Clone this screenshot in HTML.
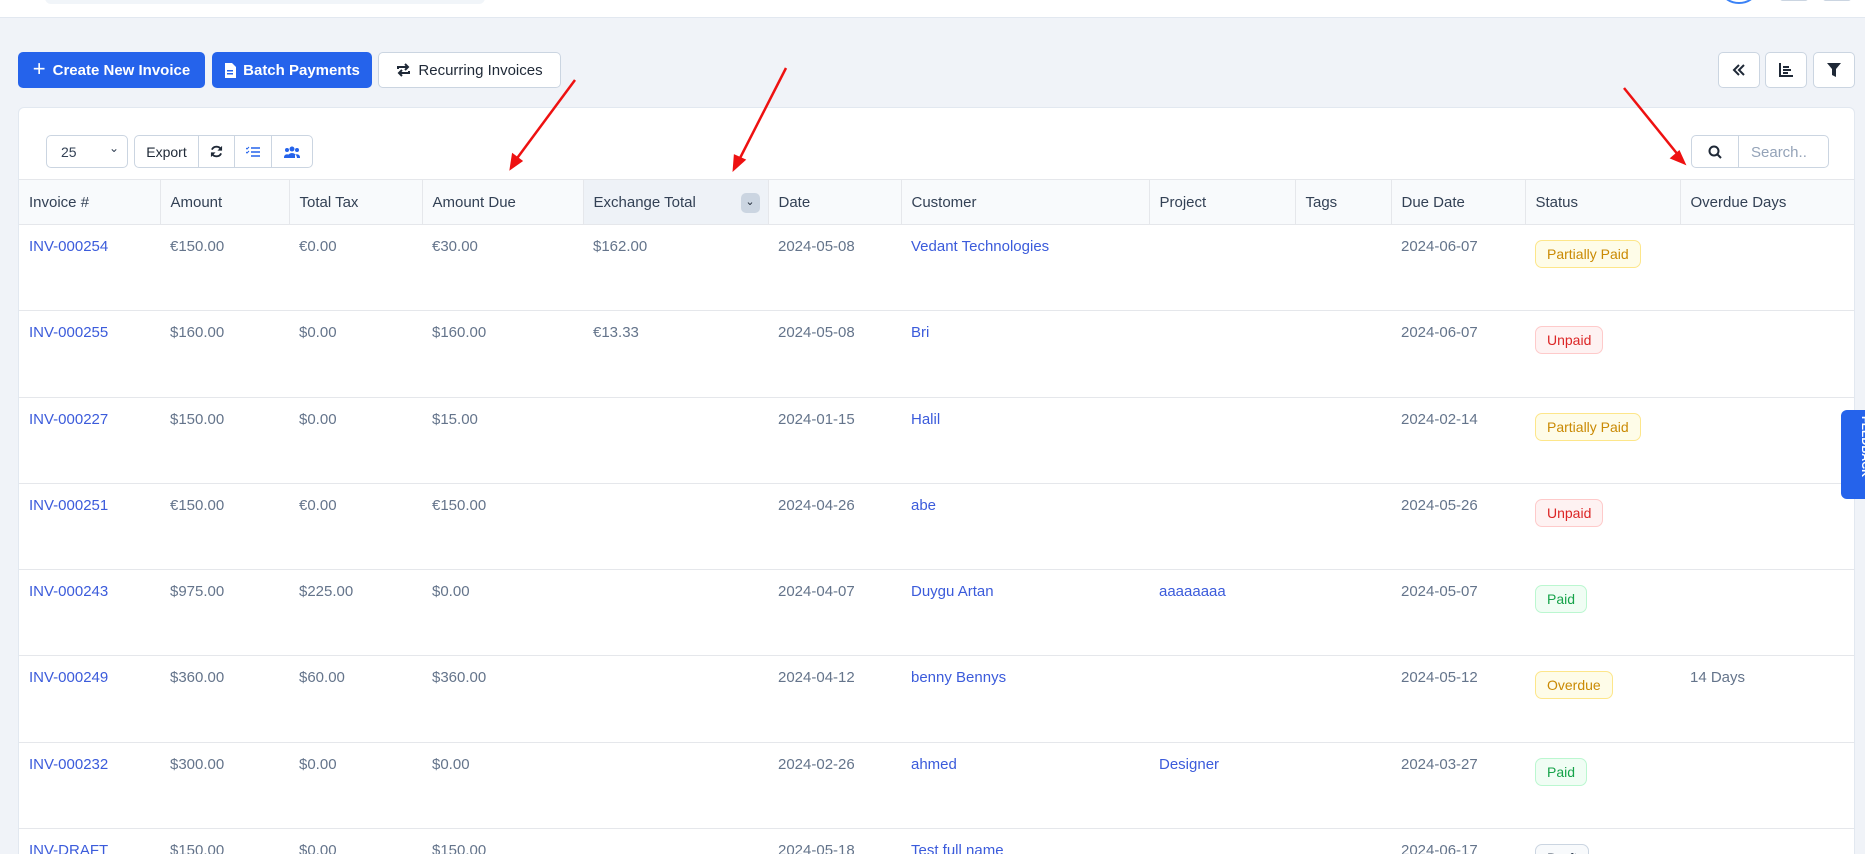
<!DOCTYPE html>
<html><head><meta charset="utf-8"><style>
*{box-sizing:border-box;margin:0;padding:0}
html,body{width:1865px;height:854px;overflow:hidden}
body{background:#f0f3f8;font-family:"Liberation Sans",sans-serif;position:relative;color:#475569}
.top{position:absolute;left:0;top:0;width:1865px;height:18px;background:#fff;border-bottom:1px solid #e2e8f0}
.topsearch{position:absolute;left:45px;top:-10px;width:440px;height:14px;background:#f1f5f9;border-radius:6px}
.btn{position:absolute;top:52px;height:36px;border-radius:5px;font-size:15px;display:flex;align-items:center;justify-content:center;gap:7px;font-weight:bold}
.blue{background:#2563eb;color:#fff}
.white{background:#fff;border:1px solid #cbd5e1;color:#1f2937;font-weight:normal}
.ib{position:absolute;top:52px;width:42px;height:36px;background:#fff;border:1px solid #cbd5e1;border-radius:5px;display:flex;align-items:center;justify-content:center}
.card{position:absolute;left:18px;top:107px;width:1837px;height:800px;background:#fff;border:1px solid #e2e8f0;border-radius:6px;overflow:hidden}
.sel{position:absolute;left:27px;top:27px;width:82px;height:33px;border:1px solid #cbd5e1;border-radius:5px;font-size:14px;color:#334155;padding:8px 14px}
.grp{position:absolute;left:115px;top:27px;height:33px;display:flex;border:1px solid #cbd5e1;border-radius:5px;overflow:hidden}
.grp div{border-right:1px solid #cbd5e1;height:100%;display:flex;align-items:center;justify-content:center;font-size:14px;color:#1f2937}
.grp div:last-child{border-right:none}
.srch{position:absolute;left:1672px;top:27px;width:138px;height:33px;border:1px solid #cbd5e1;border-radius:5px;display:flex}
table{position:absolute;left:0;top:71px;border-collapse:collapse;table-layout:fixed;width:1837px}
th{height:45px;background:#f8fafc;text-align:left;font-weight:normal;font-size:15px;color:#334155;padding-left:10px;border-right:1px solid #e5e7eb;border-bottom:1px solid #e5e7eb;border-top:1px solid #e5e7eb}
td{height:86.3px;vertical-align:top;padding:13px 0 0 10px;font-size:15px;color:#64748b;border-bottom:1px solid #e5e7eb}
.l{color:#3b5bdb}
.b{display:inline-block;font-size:14px;padding:5px 11px;border-radius:7px;border:1px solid;margin-top:2px}
.pp{background:#fefce8;border-color:#fde68a;color:#ca8a04}
.up{background:#fef2f2;border-color:#fecaca;color:#dc2626}
.pd{background:#f0fdf4;border-color:#bbf7d0;color:#16a34a}
.dr{background:#f8fafc;border-color:#cbd5e1;color:#334155}
.fb{position:absolute;left:1841px;top:410px;width:30px;height:89px;background:#2563eb;border-radius:6px 0 0 6px;color:#fff;font-size:11px;font-weight:bold;writing-mode:vertical-rl;padding-top:6px}
</style></head><body>
<div class="top"><div class="topsearch"></div>
<div style="position:absolute;left:1722px;top:-20px;width:34px;height:24px;border:2px solid #3b82f6;border-radius:50%"></div>
<div style="position:absolute;left:1780px;top:-4px;width:28px;height:5px;border:1px solid #cbd5e1;border-radius:3px"></div>
<div style="position:absolute;left:1823px;top:-4px;width:28px;height:5px;border:1px solid #cbd5e1;border-radius:3px"></div></div>

<div class="btn blue" style="left:18px;width:187px"><span style="font-size:22px;font-weight:normal;margin-top:-2px">+</span>Create New Invoice</div>
<div class="btn blue" style="left:212px;width:160px"><svg width="12" height="15" viewBox="0 0 12 15"><path d="M1 0h7l4 4v11H1z" fill="#fff"/><rect x="3" y="7" width="6" height="1.5" fill="#2563eb"/><rect x="3" y="10" width="6" height="1.5" fill="#2563eb"/></svg>Batch Payments</div>
<div class="btn white" style="left:378px;width:183px"><svg width="15" height="14" viewBox="0 0 15 14"><path d="M2 6V4h10M9 1l3 3-3 3M13 8v2H3M6 13l-3-3 3-3" fill="none" stroke="#1f2937" stroke-width="2"/></svg>Recurring Invoices</div>

<div class="ib" style="left:1718px"><svg width="14" height="12" viewBox="0 0 14 12"><path d="M7 1L2 6l5 5M12 1L7 6l5 5" fill="none" stroke="#1f2937" stroke-width="2"/></svg></div>
<div class="ib" style="left:1765px"><svg width="14" height="14" viewBox="0 0 14 14"><path d="M1 0v13h13M4 4h6M4 7h8M4 10h5" fill="none" stroke="#1f2937" stroke-width="2"/></svg></div>
<div class="ib" style="left:1813px"><svg width="14" height="14" viewBox="0 0 14 14"><path d="M0 0h14L9 6v8l-4-2V6z" fill="#1f2937"/></svg></div>

<div class="card">
<div class="sel">25<span style="position:absolute;right:8px;top:5px;font-size:12px">&#8964;</span></div>
<div class="grp"><div style="width:64px">Export</div><div style="width:36px"><svg width="13" height="13" viewBox="0 0 14 14"><path d="M12 5A5.5 5.5 0 0 0 2 5M2 9a5.5 5.5 0 0 0 10 0" fill="none" stroke="#1f2937" stroke-width="2"/><path d="M13 1v5H8zM1 13V8h5z" fill="#1f2937"/></svg></div><div style="width:37px"><svg width="14" height="12" viewBox="0 0 14 12"><path d="M5 2h9M5 6h9M5 10h9" stroke="#2563eb" stroke-width="1.6"/><path d="M0 2l1 1 2-2M0 6l1 1 2-2" stroke="#2563eb" fill="none"/></svg></div><div style="width:40px"><svg width="16" height="12" viewBox="0 0 16 12"><circle cx="8" cy="3" r="2.5" fill="#2563eb"/><circle cx="3" cy="4" r="2" fill="#2563eb"/><circle cx="13" cy="4" r="2" fill="#2563eb"/><path d="M3 12a5 5 0 0 1 10 0zM0 11a3 3 0 0 1 5-2v3H0zM16 11a3 3 0 0 0-5-2v3h5z" fill="#2563eb"/></svg></div></div>
<div class="srch"><div style="width:47px;border-right:1px solid #cbd5e1;display:flex;align-items:center;justify-content:center"><svg width="14" height="14" viewBox="0 0 14 14"><circle cx="6" cy="6" r="4.5" fill="none" stroke="#1f2937" stroke-width="2"/><path d="M9.5 9.5L13 13" stroke="#1f2937" stroke-width="2"/></svg></div><div style="padding:8px 12px;font-size:15px;color:#94a3b8">Search..</div></div>

<table>
<colgroup><col style="width:141px"><col style="width:129px"><col style="width:133px"><col style="width:161px"><col style="width:185px"><col style="width:133px"><col style="width:248px"><col style="width:146px"><col style="width:96px"><col style="width:134px"><col style="width:155px"><col style="width:176px"></colgroup>
<tr><th>Invoice #</th><th>Amount</th><th>Total Tax</th><th>Amount Due</th><th style="background:#eef2f7;position:relative">Exchange Total<span style="position:absolute;right:8px;top:13px;width:19px;height:20px;background:#cbd5e1;border-radius:5px;font-size:11px;text-align:center;line-height:18px;color:#1f2937">&#8964;</span></th><th>Date</th><th>Customer</th><th>Project</th><th>Tags</th><th>Due Date</th><th>Status</th><th style="border-right:none">Overdue Days</th></tr>
<tr><td class="l">INV-000254</td><td>€150.00</td><td>€0.00</td><td>€30.00</td><td>$162.00</td><td>2024-05-08</td><td class="l">Vedant Technologies</td><td></td><td></td><td>2024-06-07</td><td><span class="b pp">Partially Paid</span></td><td></td></tr>
<tr><td class="l">INV-000255</td><td>$160.00</td><td>$0.00</td><td>$160.00</td><td>€13.33</td><td>2024-05-08</td><td class="l">Bri</td><td></td><td></td><td>2024-06-07</td><td><span class="b up">Unpaid</span></td><td></td></tr>
<tr><td class="l">INV-000227</td><td>$150.00</td><td>$0.00</td><td>$15.00</td><td></td><td>2024-01-15</td><td class="l">Halil</td><td></td><td></td><td>2024-02-14</td><td><span class="b pp">Partially Paid</span></td><td></td></tr>
<tr><td class="l">INV-000251</td><td>€150.00</td><td>€0.00</td><td>€150.00</td><td></td><td>2024-04-26</td><td class="l">abe</td><td></td><td></td><td>2024-05-26</td><td><span class="b up">Unpaid</span></td><td></td></tr>
<tr><td class="l">INV-000243</td><td>$975.00</td><td>$225.00</td><td>$0.00</td><td></td><td>2024-04-07</td><td class="l">Duygu Artan</td><td class="l">aaaaaaaa</td><td></td><td>2024-05-07</td><td><span class="b pd">Paid</span></td><td></td></tr>
<tr><td class="l">INV-000249</td><td>$360.00</td><td>$60.00</td><td>$360.00</td><td></td><td>2024-04-12</td><td class="l">benny Bennys</td><td></td><td></td><td>2024-05-12</td><td><span class="b pp">Overdue</span></td><td>14 Days</td></tr>
<tr><td class="l">INV-000232</td><td>$300.00</td><td>$0.00</td><td>$0.00</td><td></td><td>2024-02-26</td><td class="l">ahmed</td><td class="l">Designer</td><td></td><td>2024-03-27</td><td><span class="b pd">Paid</span></td><td></td></tr>
<tr><td class="l">INV-DRAFT</td><td>$150.00</td><td>$0.00</td><td>$150.00</td><td></td><td>2024-05-18</td><td class="l">Test full name</td><td></td><td></td><td>2024-06-17</td><td><span class="b dr">Draft</span></td><td></td></tr>
</table>
</div>
<div class="fb">FEEDBACK</div>
<svg style="position:absolute;left:0;top:0" width="1865" height="854"><g stroke="#ee1111" stroke-width="2.5" fill="#ee1111"><line x1="575" y1="80" x2="515" y2="161"/><path d="M511 168l2-13 8 6z"/><line x1="786" y1="68" x2="738" y2="162"/><path d="M734 169l1-13 9 4z"/><line x1="1624" y1="88" x2="1679" y2="156"/><path d="M1684 163l-12-5 7-6z"/></g></svg>
</body></html>
